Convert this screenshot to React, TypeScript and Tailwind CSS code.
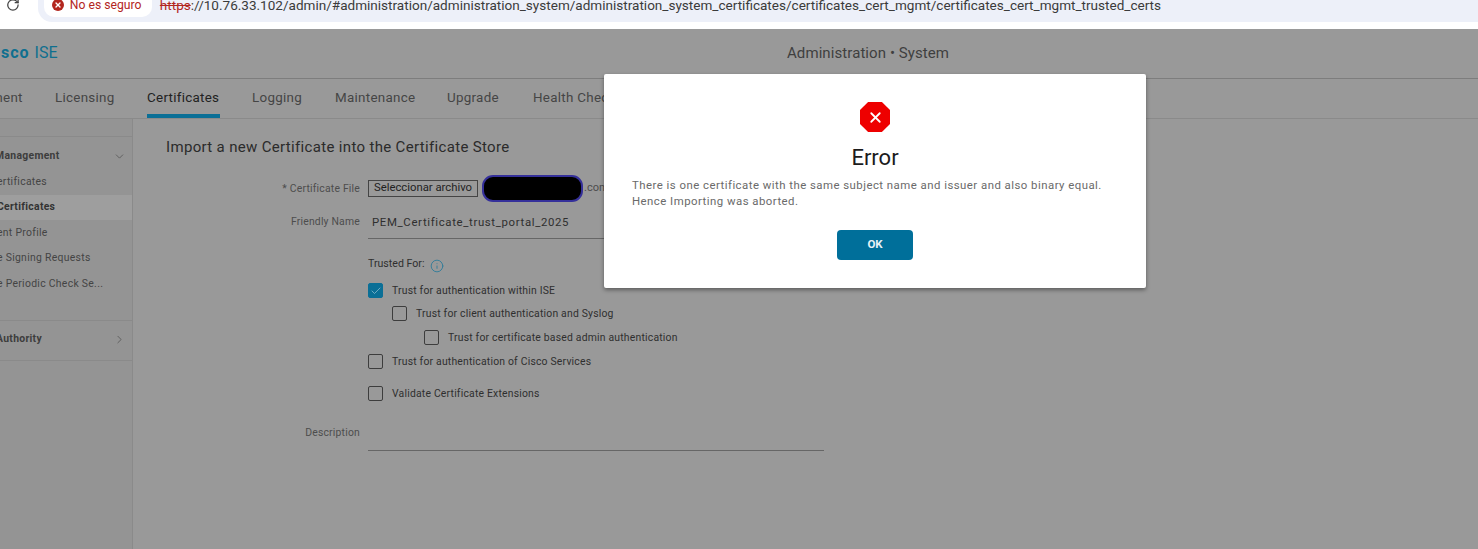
import React from 'react';
import { ChevronDown, ChevronRight, RotateCw, X, Check, Info } from 'lucide-react';

const tabs = [
  { label: 'Licensing', w: 'w-[60px]' },
  { label: 'Certificates', w: 'w-[73px]', active: true },
  { label: 'Logging', w: 'w-[51px]' },
  { label: 'Maintenance', w: 'w-[80px]' },
  { label: 'Upgrade', w: 'w-[54px]' },
  { label: 'Health Checks', w: 'w-[90px]' },
];

const sideItems = [
  { label: 'ertificates' },
  { label: 'Certificates', active: true },
  { label: 'ent Profile' },
  { label: 'e Signing Requests' },
  { label: 'e Periodic Check Se...' },
];

const CheckRow = ({ label, checked, indent, gap }: { label: string; checked?: boolean; indent: string; gap: string }) => (
  <div className={`flex h-[15px] items-center ${indent} ${gap}`}>
    <span
      className={`flex h-[15px] w-[15px] shrink-0 items-center justify-center rounded-[2px] border ${
        checked ? 'border-[#0b6f96] bg-[#0b6f96]' : 'border-[#3d3d3d]'
      }`}
    >
      {checked && <Check className="h-3 w-3 text-[#8fbfd2]" strokeWidth={1.5} />}
    </span>
    <span className="ml-[9px] whitespace-nowrap text-[10.4px] tracking-[0.2px] text-[#2f2f2f]">{label}</span>
  </div>
);

export default function App() {
  return (
    <div className="relative h-[549px] w-[1478px] overflow-hidden bg-[#999999] font-['Roboto',sans-serif]">
      {/* browser bar */}
      <div className="flex h-[29px] bg-white">
        <RotateCw className="ml-[6px] mt-[-2px] h-[14px] w-[14px] text-[#444444]" strokeWidth={2.2} />
        <div className="ml-[18px] flex h-[22px] w-[1460px] items-start rounded-bl-[14px] bg-[#edf0f9] pl-[6px]">
          <div className="flex h-[17px] w-[108px] items-start rounded-b-[10px] bg-white pl-[8px] text-[12.2px] leading-[11px] text-[#b3261e]">
            <span className="mr-[6px] flex h-[12px] w-[12px] -translate-y-[1px] items-center justify-center rounded-full bg-[#b3261e]">
              <X className="h-[8px] w-[8px] text-white" strokeWidth={4} />
            </span>
            No es seguro
          </div>
          <div className="ml-[8px] whitespace-nowrap text-[13.56px] leading-[11px] text-[#3b3b3b]">
            <span className="text-[#b3261e] line-through">https</span>
            ://10.76.33.102/admin/#administration/administration_system/administration_system_certificates/certificates_cert_mgmt/certificates_cert_mgmt_trusted_certs
          </div>
        </div>
      </div>

      {/* ISE header */}
      <div className="relative flex h-[50px] items-center border-b border-[#7d7d7d] pb-[1px]">
        <span className="ml-[1px] text-[16px] text-[#0f6f8f]">
          <b className="mr-[1px] font-bold tracking-[1px]">sco</b> ISE
        </span>
        <span className="absolute left-[787px] top-[13px] whitespace-nowrap text-[15px] tracking-[0.08px] text-[#3f3f3f]">Administration • System</span>
      </div>

      {/* tabs */}
      <div className="flex h-[40px] items-stretch border-b border-[#8a8a8a] text-[13.4px] tracking-[0.28px] text-[#454545]">
        <span className="-ml-[9px] w-[64px] pt-[9px]">ment</span>
        {tabs.map((t) => (
          <div
            key={t.label}
            className={`mr-[32px] shrink-0 whitespace-nowrap border-b-[4px] pt-[9px] ${t.w} ${
              t.active ? 'border-[#0b6f96] text-[#222222]' : 'border-transparent'
            }`}
          >
            {t.label}
          </div>
        ))}
      </div>

      <div className="flex h-[431px]">
        {/* sidebar */}
        <div className="h-full w-[133px] shrink-0 border-r border-[#8a8a8a] bg-[#949494] pt-[17px] text-[10.4px] tracking-[0.3px] text-[#444444]">
          <div className="flex h-[33px] items-center border-t border-[#8a8a8a] pr-[6px] pt-[6px] font-bold text-[#3d3d3d]">
            <span className="-ml-[5px] flex-1">Management</span>
            <ChevronDown className="h-[13px] w-[13px] text-[#555555]" strokeWidth={1.5} />
          </div>
          {sideItems.map((s) => (
            <div
              key={s.label}
              className={`flex h-[25.5px] items-center whitespace-nowrap ${s.active ? 'bg-[#9e9e9e] font-bold text-[#333333]' : ''}`}
            >
              <span className="-ml-[3px]">{s.label}</span>
            </div>
          ))}
          <div className="mt-[23px] flex h-[41px] items-center border-y border-[#8a8a8a] pb-[2px] pr-[6px] font-bold text-[#3d3d3d]">
            <span className="-ml-[4px] flex-1">Authority</span>
            <ChevronRight className="h-[13px] w-[13px] text-[#555555]" strokeWidth={1.5} />
          </div>
        </div>

        {/* form */}
        <div className="flex-1 pl-[33px] pt-[19px]">
          <h1 className="text-[15px] leading-[18px] tracking-[0.33px] text-[#2b2b2b]">Import a new Certificate into the Certificate Store</h1>

          <div className="mt-[18px] flex h-[29px] items-center text-[10.4px] text-[#4d4d4d]">
            <span className="w-[194px] text-right tracking-[0.2px]">* Certificate File</span>
            <span className="ml-[8px] flex h-[17px] w-[110px] items-center justify-center whitespace-nowrap border border-[#444444] text-[11.3px] text-[#222222]">
              Seleccionar archivo
            </span>
            <span className="ml-[4px] h-[27px] w-[101px] rounded-[11px] border-2 border-[#35309a] bg-black" />
            <span className="ml-[1px] text-[11px]">.com</span>
          </div>

          <div className="mt-[5px] flex h-[31px] text-[10.4px] text-[#4d4d4d]">
            <span className="w-[194px] pt-[6px] text-right tracking-[0.2px]">Friendly Name</span>
            <span className="ml-[8px] h-[31px] w-[456px] border-b border-[#666666] pl-[4px] pt-[6px] text-[11.4px] tracking-[0.65px] text-[#2f2f2f]">
              PEM_Certificate_trust_portal_2025
            </span>
          </div>

          <div className="ml-[202px] mt-[17px] flex h-[16px] items-center text-[10.6px] text-[#2f2f2f]">
            Trusted For:
            <Info className="ml-[6px] mt-[3px] h-[14px] w-[14px] text-[#2b7a99]" strokeWidth={1.5} />
          </div>

          <CheckRow label="Trust for authentication within ISE" checked indent="ml-[202px]" gap="mt-[11px]" />
          <CheckRow label="Trust for client authentication and Syslog" indent="ml-[226px]" gap="mt-[8px]" />
          <CheckRow label="Trust for certificate based admin authentication" indent="ml-[258px]" gap="mt-[9px]" />
          <CheckRow label="Trust for authentication of Cisco Services" indent="ml-[202px]" gap="mt-[9px]" />
          <CheckRow label="Validate Certificate Extensions" indent="ml-[202px]" gap="mt-[17px]" />

          <div className="mt-[17px] flex h-[33px] text-[10.4px] text-[#4d4d4d]">
            <span className="w-[194px] pt-[7px] text-right tracking-[0.2px]">Description</span>
            <span className="ml-[8px] h-[33px] w-[456px] border-b border-[#666666]" />
          </div>
        </div>
      </div>

      {/* error modal */}
      <div className="absolute left-[604px] top-[74px] flex h-[214px] w-[542px] flex-col items-center rounded-[2px] bg-white pt-[28px] shadow-[0_2px_4px_rgba(0,0,0,0.4)]">
        <span className="flex h-[30px] w-[30px] items-center justify-center bg-[#ee0000] [clip-path:polygon(27%_0,73%_0,100%_27%,100%_73%,73%_100%,27%_100%,0_73%,0_27%)]">
          <X className="h-[17px] w-[17px] text-white" strokeWidth={2.5} />
        </span>
        <h2 className="mt-[13px] text-[22px] leading-[26px] text-[#1c1c1c]">Error</h2>
        <p className="mt-[6px] w-full pl-[28px] text-[11.4px] leading-[16px] tracking-[0.47px] text-[#6a6a6a]">
          There is one certificate with the same subject name and issuer and also binary equal.
          <br />
          Hence Importing was aborted.
        </p>
        <button className="mt-[21px] h-[30px] w-[76px] rounded-[4px] bg-[#006f9a] text-[11.5px] font-bold text-[#e8f2f6]">OK</button>
      </div>
    </div>
  );
}
